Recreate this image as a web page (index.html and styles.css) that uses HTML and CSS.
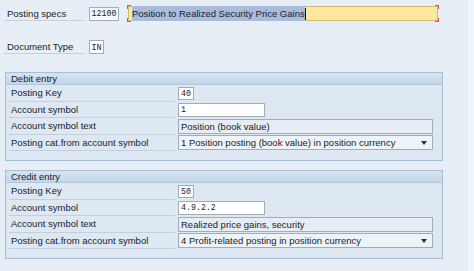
FILE: index.html
```html
<!DOCTYPE html>
<html lang="en">
<head>
    <meta charset="UTF-8">
    <title>Posting specs</title>
    <link rel="stylesheet" href="styles.css">
</head>
<body>
    <div class="screen">
        <div class="top-row first">
            <span class="label short">Posting specs</span>
            <span class="field code spec">12100</span>
            <span class="field focus"><span class="selected">Position to Realized Security Price Gains</span><span class="caret"></span></span>
        </div>
        <div class="top-row second">
            <span class="label short">Document Type</span>
            <span class="field code doc">IN</span>
        </div>

        <div class="group">
            <div class="group-title">Debit entry</div>
            <div class="group-body">
                <div class="row">
                    <span class="label">Posting Key</span>
                    <span class="field code key">40</span>
                </div>
                <div class="row">
                    <span class="label">Account symbol</span>
                    <span class="field code account">1</span>
                </div>
                <div class="row">
                    <span class="label">Account symbol text</span>
                    <span class="field display">Position (book value)</span>
                </div>
                <div class="row">
                    <span class="label">Posting cat.from account symbol</span>
                    <span class="field select">1 Position posting (book value) in position currency<span class="arrow"></span></span>
                </div>
            </div>
        </div>

        <div class="group">
            <div class="group-title">Credit entry</div>
            <div class="group-body">
                <div class="row">
                    <span class="label">Posting Key</span>
                    <span class="field code key">50</span>
                </div>
                <div class="row">
                    <span class="label">Account symbol</span>
                    <span class="field code account">4.9.2.2</span>
                </div>
                <div class="row">
                    <span class="label">Account symbol text</span>
                    <span class="field display">Realized price gains, security</span>
                </div>
                <div class="row">
                    <span class="label">Posting cat.from account symbol</span>
                    <span class="field select">4 Profit-related posting in position currency<span class="arrow"></span></span>
                </div>
            </div>
        </div>
    </div>
</body>
</html>
```

FILE: styles.css
```css
:root {
    --screen-bg: #e8eef5;
    --group-bg: #dde8f3;
    --group-border: #a9bdd2;
    --line-color: #c3cfdc;
    --field-border: #a3abb4;
    --text-color: #18212b;
    --focus-red: #d9534f;
}

* {
    margin: 0;
    padding: 0;
    box-sizing: border-box;
}

body {
    font-family: 'Liberation Sans', Arial, sans-serif;
    font-size: 9.5px;
    color: var(--text-color);
    background-color: #f1f4f8;
}

.screen {
    width: 468px;
    height: 271px;
    background-color: var(--screen-bg);
    padding: 6px 0 0 4px;
}

.top-row {
    display: flex;
    align-items: center;
}

.top-row.first {
    height: 15px;
}

.top-row.second {
    height: 14px;
    margin-top: 19px;
}

.label {
    display: flex;
    align-items: center;
    height: 100%;
    padding-left: 2px;
    border-bottom: 1px solid var(--line-color);
    white-space: nowrap;
}

.label.short {
    width: 80px;
    padding-left: 3px;
    margin-right: 5px;
}

.field {
    display: flex;
    align-items: center;
    height: 14px;
    padding: 0 2px;
    background-color: #fff;
    border: 1px solid var(--field-border);
    white-space: nowrap;
}

.code {
    font-family: 'Liberation Mono', 'Courier New', monospace;
    font-size: 8.3px;
}

.spec {
    width: 30px;
    justify-content: center;
    background-color: #f6f8fb;
}

.doc {
    width: 15px;
    justify-content: center;
}

.focus {
    position: relative;
    width: 310px;
    height: 15px;
    margin-left: 9px;
    padding-left: 3px;
    background-color: #fde89c;
    border-color: #cdbb78;
}

/* red focus corners */
.focus::after {
    content: "";
    position: absolute;
    top: -2px;
    bottom: -2px;
    left: -2px;
    right: -2px;
    background:
        linear-gradient(var(--focus-red), var(--focus-red)) left top / 1px 4px no-repeat,
        linear-gradient(var(--focus-red), var(--focus-red)) left top / 4px 1px no-repeat,
        linear-gradient(var(--focus-red), var(--focus-red)) left bottom / 1px 4px no-repeat,
        linear-gradient(var(--focus-red), var(--focus-red)) left bottom / 4px 1px no-repeat,
        linear-gradient(var(--focus-red), var(--focus-red)) right top / 1px 4px no-repeat,
        linear-gradient(var(--focus-red), var(--focus-red)) right top / 4px 1px no-repeat,
        linear-gradient(var(--focus-red), var(--focus-red)) right bottom / 1px 4px no-repeat,
        linear-gradient(var(--focus-red), var(--focus-red)) right bottom / 4px 1px no-repeat;
}

.selected {
    background-color: #a9bcdc;
    padding: 2px 0;
}

.caret {
    display: inline-block;
    width: 1px;
    height: 12px;
    background-color: #111;
}

.group {
    width: 438px;
    margin: 18px 0 0 1px;
    border: 1px solid var(--group-border);
    background-color: var(--group-bg);
}

.group + .group {
    margin-top: 9px;
}

.group-title {
    height: 12px;
    padding-left: 5px;
    display: flex;
    align-items: center;
    background: linear-gradient(#d7e4f1, #c3d5e9);
    border-bottom: 1px solid #b3c6da;
}

.group-body {
    padding: 0 9px 9px 3px;
}

.row {
    display: grid;
    grid-template-columns: 166px 1fr;
    column-gap: 3px;
    align-items: center;
    height: 16.5px;
}

.key {
    width: 16px;
    height: 13px;
}

.account {
    width: 87px;
}

.display {
    background-color: #e7edf4;
    height: 15px;
}

.select {
    position: relative;
    height: 15px;
    background-color: #eef3f8;
}

.arrow {
    position: absolute;
    right: 5px;
    top: 5px;
    border-left: 3px solid transparent;
    border-right: 3px solid transparent;
    border-top: 4px solid #2a2f36;
}
```
